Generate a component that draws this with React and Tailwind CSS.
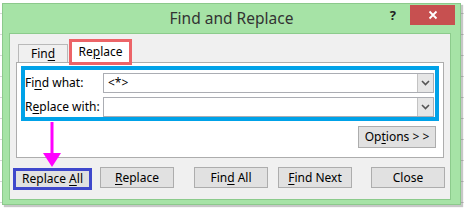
import React from "react";

function Key({ children }) {
  return <span className="underline decoration-1 underline-offset-[2px]">{children}</span>;
}

function Combo({ value }) {
  return (
    <div className="flex h-[20px] w-[331px] items-stretch border border-[#abadb3] bg-white">
      <div className="flex flex-1 items-center pl-[4px] text-[12px] text-black">{value}</div>
      <div className="flex w-[16px] items-center justify-center border-l border-[#c3c3c3] bg-[#e6e6e6]">
        <svg width="9" height="6" viewBox="0 0 9 6">
          <path d="M1 1 L4.5 4.5 L8 1" fill="none" stroke="#555" strokeWidth="1.6" />
        </svg>
      </div>
    </div>
  );
}

function Btn({ children, className = "" }) {
  return (
    <div
      className={
        "flex h-[21px] w-[74px] items-center justify-center border border-[#adadad] bg-[#e1e1e1] text-[12px] text-black " +
        className
      }
    >
      <span>{children}</span>
    </div>
  );
}

export default function App() {
  return (
    <div className="relative h-[210px] w-[464px] overflow-hidden bg-white bg-[linear-gradient(to_bottom,#d6d6d6_1px,transparent_1px)] bg-[length:100%_21px] bg-[position:0_13px] pl-[2px] pt-[3px] font-['Noto_Sans',sans-serif]">
      {/* dialog */}
      <div className="flex h-[202px] w-[459px] flex-col border border-[#8cc98c] bg-[#a6e3a6] shadow-[2px_2px_1px_rgba(0,0,0,0.22)]">
        {/* title bar */}
        <div className="relative flex h-[29px] items-start justify-center">
          <div className="mt-[4px] text-[15.5px] leading-[20px] text-[#333]">Find and Replace</div>
          <div className="absolute right-[5px] top-[1px] flex items-start">
            <div className="mr-[14px] mt-[1px] text-[13px] font-bold leading-[18px] text-[#222]">?</div>
            <div className="flex h-[20px] w-[45px] items-center justify-center bg-[#c75050]">
              <svg width="10" height="10" viewBox="0 0 10 10">
                <path d="M1.5 1.5 L8.5 8.5 M8.5 1.5 L1.5 8.5" stroke="#fff" strokeWidth="1.8" />
              </svg>
            </div>
          </div>
        </div>

        {/* client area */}
        <div className="ml-[6px] h-[167px] w-[442px] border border-[#8ccb8c] bg-[#f0f0f0]">
          {/* tabs */}
          <div className="flex h-[28px] items-end pl-[8px]">
            <div className="flex h-[18px] w-[50px] items-center justify-center border border-b-0 border-[#b9b9b9] bg-[#f0f0f0] text-[12px] text-black">
              <span>Fin<Key>d</Key></span>
            </div>
            <div className="relative z-10 mb-[-3px] ml-[1px] flex h-[26px] w-[63px] items-center justify-center border-[3px] border-[#ec6468] bg-white text-[12px] text-black">
              <span>Re<Key>p</Key>lace</span>
            </div>
          </div>

          {/* tab page */}
          <div className="ml-[6px] h-[96px] w-[428px] border border-[#adadad] bg-white">
            <div className="ml-[4px] mt-[3px] flex h-[55px] w-[418px] flex-col gap-[4px] border-[4px] border-[#00a2e8] pt-[3px]">
              <div className="flex items-center">
                <div className="w-[78px] text-[12px] text-black">
                  Fi<Key>n</Key>d what:
                </div>
                <Combo value="<*>" />
              </div>
              <div className="flex items-center">
                <div className="w-[78px] text-[12px] text-black">
                  R<Key>e</Key>place with:
                </div>
                <Combo value="" />
              </div>
            </div>
            <div className="mr-[7px] mt-[5px] flex justify-end">
              <div className="flex h-[22px] w-[78px] items-center justify-center border border-[#adadad] bg-[#e1e1e1] text-[12px] text-black">
                <span>Op<Key>t</Key>ions &gt; &gt;</span>
              </div>
            </div>
          </div>

          {/* buttons */}
          <div className="mt-[9px] flex items-start">
            <div className="ml-[3px] mt-[1px] flex h-[22px] w-[79px] items-center justify-center border-[3px] border-[#3f48cc] bg-[#e1e1e1] text-[12px] text-black">
              <span>Replace <Key>A</Key>ll</span>
            </div>
            <Btn className="ml-[8px] w-[73px]">
              <Key>R</Key>eplace
            </Btn>
            <Btn className="ml-[20px]">
              Fin<Key>d</Key> All
            </Btn>
            <Btn className="ml-[10px] border-[#3399ff]">
              <Key>F</Key>ind Next
            </Btn>
            <Btn className="ml-[19px]">Close</Btn>
          </div>
        </div>
      </div>

      {/* magenta annotation arrow */}
      <svg className="absolute left-[42px] top-[122px]" width="20" height="46" viewBox="0 0 20 46">
        <rect x="8.5" y="0" width="3" height="32" fill="#ff00ff" />
        <path d="M1 31 L19 31 L10 45 Z" fill="#ff00ff" />
      </svg>
    </div>
  );
}
